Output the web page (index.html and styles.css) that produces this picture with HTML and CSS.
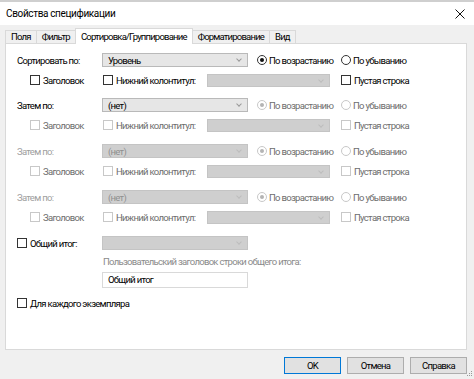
FILE: index.html
```html
<!DOCTYPE html>
<html lang="ru">
<head>
  <meta charset="UTF-8" />
  <title>Свойства спецификации</title>
  <link rel="stylesheet" href="styles.css">
</head>
<body>

  <div class="window">
    <div class="titlebar">
      <span class="title">Свойства спецификации</span>
      <svg class="close" width="10" height="10" viewBox="0 0 10 10">
        <path d="M0.5 0.5 L9.5 9.5 M9.5 0.5 L0.5 9.5" stroke="#111" stroke-width="1" fill="none"/>
      </svg>
    </div>

    <div class="tabs">
      <div class="tab">Поля</div>
      <div class="tab">Фильтр</div>
      <div class="tab active">Сортировка/Группирование</div>
      <div class="tab">Форматирование</div>
      <div class="tab">Вид</div>
    </div>

    <div class="page">

      <!-- first sort level -->
      <div class="block">
        <div class="cell label">Сортировать по:</div>
        <div class="cell span2"><div class="select">Уровень<span class="arrow"></span></div></div>
        <div class="cell radio-cell"><span class="radio checked"></span>По возрастанию</div>
        <div class="cell"><span class="radio"></span>По убыванию</div>

        <div class="cell indent"><span class="check"></span>Заголовок</div>
        <div class="cell indent-s"><span class="check"></span>Нижний колонтитул:</div>
        <div class="cell span2"><div class="select off wide"><span class="arrow"></span></div></div>
        <div class="cell"><span class="check"></span>Пустая строка</div>
      </div>

      <div class="block">
        <div class="cell label">Затем по:</div>
        <div class="cell span2"><div class="select">(нет)<span class="arrow"></span></div></div>
        <div class="cell radio-cell muted"><span class="radio checked dis"></span>По возрастанию</div>
        <div class="cell muted"><span class="radio dis"></span>По убыванию</div>

        <div class="cell indent muted"><span class="check dis"></span>Заголовок</div>
        <div class="cell indent-s muted"><span class="check dis"></span>Нижний колонтитул:</div>
        <div class="cell span2"><div class="select off wide"><span class="arrow"></span></div></div>
        <div class="cell muted"><span class="check dis"></span>Пустая строка</div>
      </div>

      <div class="block">
        <div class="cell label faint">Затем по:</div>
        <div class="cell span2"><div class="select off faint-text">(нет)<span class="arrow"></span></div></div>
        <div class="cell radio-cell muted"><span class="radio checked dis"></span>По возрастанию</div>
        <div class="cell muted"><span class="radio dis"></span>По убыванию</div>

        <div class="cell indent muted"><span class="check dis"></span>Заголовок</div>
        <div class="cell indent-s muted"><span class="check dis"></span>Нижний колонтитул:</div>
        <div class="cell span2"><div class="select off wide"><span class="arrow"></span></div></div>
        <div class="cell muted"><span class="check dis"></span>Пустая строка</div>
      </div>

      <div class="block">
        <div class="cell label faint">Затем по:</div>
        <div class="cell span2"><div class="select off faint-text">(нет)<span class="arrow"></span></div></div>
        <div class="cell radio-cell muted"><span class="radio checked dis"></span>По возрастанию</div>
        <div class="cell muted"><span class="radio dis"></span>По убыванию</div>

        <div class="cell indent muted"><span class="check dis"></span>Заголовок</div>
        <div class="cell indent-s muted"><span class="check dis"></span>Нижний колонтитул:</div>
        <div class="cell span2"><div class="select off wide"><span class="arrow"></span></div></div>
        <div class="cell muted"><span class="check dis"></span>Пустая строка</div>
      </div>

      <!-- grand total -->
      <div class="total">
        <div class="cell"><span class="check"></span>Общий итог:</div>
        <div class="cell"><div class="select off"><span class="arrow"></span></div></div>
        <div></div>
        <div class="cell hint">Пользовательский заголовок строки общего итога:</div>
        <div></div>
        <div class="cell"><div class="textbox">Общий итог</div></div>
      </div>

      <div class="cell each"><span class="check"></span>Для каждого экземпляра</div>
    </div>

    <div class="footer">
      <button class="btn default">OK</button>
      <button class="btn">Отмена</button>
      <button class="btn">Справка</button>
      <svg class="grip" width="6" height="6" viewBox="0 0 6 6">
        <rect x="4" y="0" width="1" height="1" fill="#999"/>
        <rect x="2" y="2" width="1" height="1" fill="#999"/>
        <rect x="4" y="2" width="1" height="1" fill="#999"/>
        <rect x="0" y="4" width="1" height="1" fill="#999"/>
        <rect x="2" y="4" width="1" height="1" fill="#999"/>
        <rect x="4" y="4" width="1" height="1" fill="#999"/>
      </svg>
    </div>
  </div>

</body>
</html>
```

FILE: styles.css
```css
body {
  margin: 0;
  font-family: Roboto, "Noto Sans", Arial, sans-serif;
  font-size: 9.5px;
  letter-spacing: -0.7px;
  color: #000;
  background: #f0f0f0;
}

.window {
  width: 474px;
  height: 379px;
  box-sizing: border-box;
  border-top: 2px solid #cfcfcf;
  background: #f0f0f0;
  display: flex;
  flex-direction: column;
  overflow: hidden;
}

.titlebar {
  height: 23px;
  background: #fff;
  display: flex;
  align-items: center;
  justify-content: space-between;
  padding: 0 9px 0 6px;
  font-size: 10px;
  letter-spacing: -0.35px;
}

.close {
  display: block;
}

/* tab strip */
.tabs {
  height: 18px;
  display: flex;
  align-items: flex-end;
  padding-left: 5px;
}

.tab {
  height: 13px;
  line-height: 12px;
  padding: 0 5px;
  border: 1px solid #d9d9d9;
  border-bottom: none;
  margin-right: -1px;
  box-sizing: border-box;
  letter-spacing: -0.8px;
}

.tab.active {
  height: 16px;
  line-height: 15px;
  background: #fff;
  margin-bottom: -1px;
  position: relative;
  z-index: 1;
}

.page {
  height: 307px;
  margin: 0 7px 0 5px;
  background: #fff;
  border: 1px solid #d9d9d9;
  box-sizing: border-box;
  padding: 6px 0 0 11px;
}

.block, .total {
  display: grid;
  grid-template-columns: 85px 105px 42px 92px 100px;
  grid-auto-rows: 20px;
  margin-bottom: 6px;
}

.block:first-child {
  margin-bottom: 5px;
}

.total {
  grid-template-columns: 85px 147px;
  grid-template-rows: 20px 16px 21px;
  margin-bottom: 0;
}

.cell {
  display: flex;
  align-items: center;
  white-space: nowrap;
}

.span2 {
  grid-column: span 2;
}

.indent {
  padding-left: 13px;
}

.indent-s {
  padding-left: 1px;
}

.radio-cell {
  padding-left: 8px;
}

.muted {
  color: #6d6d6d;
}

.faint {
  color: #a0a0a0;
}

.hint {
  color: #8a8a8a;
  padding-left: 1px;
}

.each {
  height: 20px;
  margin-top: 3px;
}

/* controls */
.check {
  width: 10px;
  height: 10px;
  box-sizing: border-box;
  border: 1px solid #333;
  background: #fff;
  margin-right: 3px;
  flex: none;
}

.check.dis {
  border-color: #c8c8c8;
}

.radio {
  width: 10px;
  height: 10px;
  box-sizing: border-box;
  border: 1px solid #333;
  border-radius: 50%;
  background: #fff;
  margin-right: 2px;
  flex: none;
  position: relative;
}

.radio.checked::after {
  content: "";
  position: absolute;
  left: 2px;
  top: 2px;
  width: 4px;
  height: 4px;
  border-radius: 50%;
  background: #111;
}

.radio.dis {
  border-color: #c8c8c8;
}

.radio.checked.dis::after {
  background: #b4b4b4;
}

.select {
  width: 146px;
  height: 14px;
  box-sizing: border-box;
  border: 1px solid #b9b9b9;
  background: #e6e6e6;
  padding-left: 5px;
  display: flex;
  align-items: center;
  position: relative;
}

.select.off {
  background: #cfcfcf;
  border-color: #c4c4c4;
}

.select.wide {
  width: 123px;
  height: 13px;
}

.faint-text {
  color: #8f8f8f;
}

.arrow {
  position: absolute;
  right: 6px;
  top: 3px;
  width: 3px;
  height: 3px;
  border-right: 1px solid #9a9a9a;
  border-bottom: 1px solid #9a9a9a;
  transform: rotate(45deg);
}

.select.off .arrow {
  border-color: #bdbdbd;
}

.textbox {
  width: 146px;
  height: 16px;
  box-sizing: border-box;
  border: 1px solid #d9d9d9;
  padding-left: 5px;
  display: flex;
  align-items: center;
}

/* footer */
.footer {
  flex: 1;
  display: flex;
  align-items: flex-start;
  justify-content: flex-end;
  gap: 6px;
  padding: 7px 7px 0 0;
  position: relative;
}

.btn {
  width: 57px;
  height: 17px;
  font-family: inherit;
  font-size: 9.5px;
  letter-spacing: inherit;
  padding: 0;
  background: #e1e1e1;
  border: 1px solid #adadad;
  color: #000;
}

.btn.default {
  border-color: #0078d7;
}

.grip {
  position: absolute;
  right: 1px;
  bottom: 2px;
}
```
